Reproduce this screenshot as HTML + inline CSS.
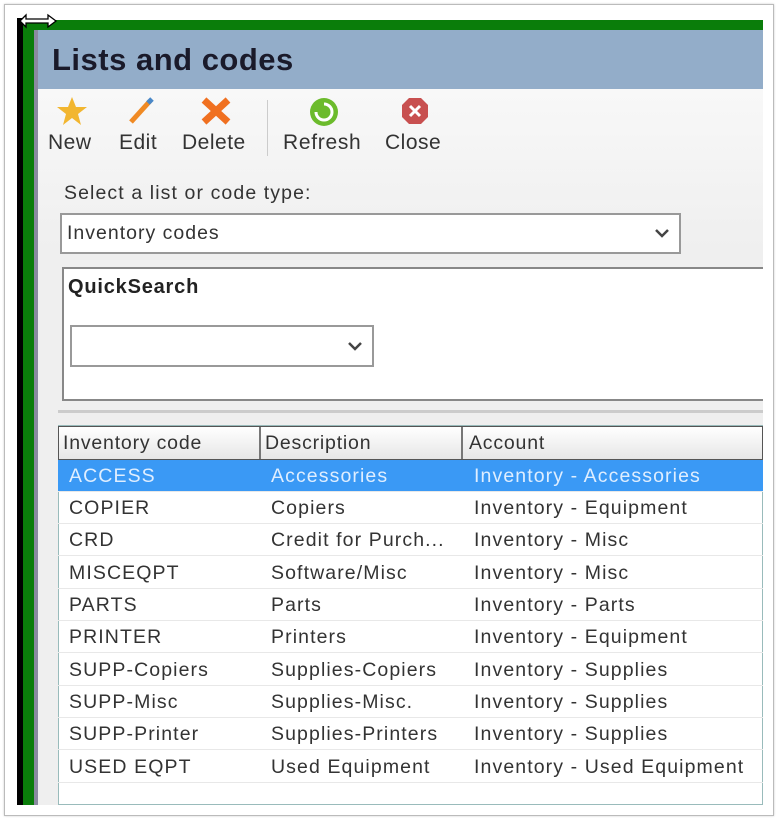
<!DOCTYPE html>
<html><head><style>
*{margin:0;padding:0;box-sizing:border-box}
body{width:778px;height:820px;background:#fff;position:relative;overflow:hidden;font-family:"Liberation Sans","DejaVu Sans",sans-serif;color:#222}
.a{position:absolute}
.frame{left:4px;top:4px;width:770px;height:812px;border:1px solid #bbb;box-shadow:0 0 2px #ccc}
.t{position:absolute;white-space:nowrap}
.row{position:absolute;left:58px;width:705px;height:32px;border-bottom:1px solid #e8e8e8;font-size:19.5px;line-height:32px;color:#333;letter-spacing:1.1px}
.row span{position:absolute;top:0}
</style></head><body>
<div class="a frame"></div>
<div class="a" style="left:17px;top:18px;width:6px;height:787px;background:#000"></div>
<div class="a" style="left:23px;top:20px;width:740px;height:10px;background:#0a7d0a"></div>
<div class="a" style="left:23px;top:20px;width:11px;height:785px;background:#0a7d0a"></div>
<div class="a" style="left:34px;top:30px;width:4px;height:775px;background:#8a8aa0"></div>
<div class="a" style="left:38px;top:30px;width:725px;height:59px;background:#93adc9"></div>
<div class="t" style="left:52px;top:42px;font-size:31px;font-weight:bold;color:#1a1a2a;letter-spacing:0.5px">Lists and codes</div>
<div class="a" style="left:38px;top:89px;width:725px;height:716px;background:linear-gradient(#f8f8f8,#efefef 160px,#efefef)"></div>
<svg class="a" style="left:55px;top:96px" width="34" height="30" viewBox="0 0 34 30"><polygon points="17,1 21,11 32,11 23,18 26,29 17,22 8,29 11,18 2,11 13,11" fill="#f2b630"/></svg>
<svg class="a" style="left:126px;top:96px" width="30" height="30"><line x1="5" y1="26" x2="24" y2="5" stroke="#f08a24" stroke-width="5"/><line x1="22" y1="7" x2="26" y2="3" stroke="#4a88c8" stroke-width="5"/></svg>
<svg class="a" style="left:200px;top:96px" width="32" height="30"><path d="M4 4L28 26M28 4L4 26" stroke="#f07020" stroke-width="7"/></svg>
<div class="a" style="left:267px;top:100px;width:1px;height:56px;background:#ccc"></div>
<svg class="a" style="left:306px;top:95px" width="36" height="32"><circle cx="18" cy="17" r="14" fill="#6cbb2c"/><path d="M18 9a8 8 0 1 1-8 8" stroke="#fff" stroke-width="3" fill="none"/></svg>
<svg class="a" style="left:400px;top:96px" width="30" height="30"><polygon points="9,2 21,2 28,9 28,21 21,28 9,28 2,21 2,9" fill="#c85050"/><path d="M10 10L20 20M20 10L10 20" stroke="#fff" stroke-width="3"/></svg>
<div class="t" style="left:48px;top:131px;font-size:21px;color:#333;letter-spacing:0.5px">New</div>
<div class="t" style="left:119px;top:131px;font-size:21px;color:#333;letter-spacing:0.5px">Edit</div>
<div class="t" style="left:182px;top:131px;font-size:21px;color:#333;letter-spacing:0.5px">Delete</div>
<div class="t" style="left:283px;top:131px;font-size:21px;color:#333;letter-spacing:0.7px">Refresh</div>
<div class="t" style="left:385px;top:131px;font-size:21px;color:#333;letter-spacing:0.5px">Close</div>
<div class="t" style="left:64px;top:182px;font-size:19.5px;color:#333;letter-spacing:1.1px">Select a list or code type:</div>
<div class="a" style="left:60px;top:213px;width:621px;height:41px;background:#fff;border:2px solid #999"></div>
<div class="t" style="left:67px;top:222px;font-size:19.5px;color:#333;letter-spacing:1px">Inventory codes</div>
<svg class="a" style="left:654px;top:227px" width="16" height="12"><path d="M2 3L8 9L14 3" stroke="#444" stroke-width="2.5" fill="none"/></svg>
<div class="a" style="left:62px;top:267px;width:701px;height:134px;background:#fff;border:2px solid #888;border-right:none"></div>
<div class="t" style="left:68px;top:276px;font-size:20px;font-weight:bold;color:#222;letter-spacing:0.8px">QuickSearch</div>
<div class="a" style="left:70px;top:325px;width:304px;height:42px;background:#fff;border:2px solid #999"></div>
<svg class="a" style="left:347px;top:340px" width="16" height="12"><path d="M2 3L8 9L14 3" stroke="#444" stroke-width="2.5" fill="none"/></svg>
<div class="a" style="left:58px;top:410px;width:705px;height:3px;background:#ccc"></div>
<div class="a" style="left:58px;top:425px;width:705px;height:380px;background:#fff;border:1px solid #9bb"></div>
<div class="a" style="left:58px;top:426px;width:705px;height:34px;background:linear-gradient(#fff,#e6e6e6);border:1px solid #555;font-size:19.5px;line-height:32px;color:#333;letter-spacing:0.8px">
<span class="t" style="left:4px">Inventory code</span>
<span class="a" style="left:200px;top:0;width:2px;height:32px;background:#777"></span>
<span class="t" style="left:206px">Description</span>
<span class="a" style="left:402px;top:0;width:2px;height:32px;background:#777"></span>
<span class="t" style="left:410px">Account</span>
</div>
<div class="row" style="top:460px;background:#3a99f5;color:#dfeeff"><span style="left:11px">ACCESS</span><span style="left:213px">Accessories</span><span style="left:416px">Inventory - Accessories</span></div>
<div class="row" style="top:492px"><span style="left:11px">COPIER</span><span style="left:213px">Copiers</span><span style="left:416px">Inventory - Equipment</span></div>
<div class="row" style="top:524px"><span style="left:11px">CRD</span><span style="left:213px">Credit for Purch...</span><span style="left:416px">Inventory - Misc</span></div>
<div class="row" style="top:557px"><span style="left:11px">MISCEQPT</span><span style="left:213px">Software/Misc</span><span style="left:416px">Inventory - Misc</span></div>
<div class="row" style="top:589px"><span style="left:11px">PARTS</span><span style="left:213px">Parts</span><span style="left:416px">Inventory - Parts</span></div>
<div class="row" style="top:621px"><span style="left:11px">PRINTER</span><span style="left:213px">Printers</span><span style="left:416px">Inventory - Equipment</span></div>
<div class="row" style="top:654px"><span style="left:11px">SUPP-Copiers</span><span style="left:213px">Supplies-Copiers</span><span style="left:416px">Inventory - Supplies</span></div>
<div class="row" style="top:686px"><span style="left:11px">SUPP-Misc</span><span style="left:213px">Supplies-Misc.</span><span style="left:416px">Inventory - Supplies</span></div>
<div class="row" style="top:718px"><span style="left:11px">SUPP-Printer</span><span style="left:213px">Supplies-Printers</span><span style="left:416px">Inventory - Supplies</span></div>
<div class="row" style="top:751px"><span style="left:11px">USED EQPT</span><span style="left:213px">Used Equipment</span><span style="left:416px">Inventory - Used Equipment</span></div>
<svg class="a" style="left:18px;top:13px" width="40" height="16"><path d="M2 8L8 2V6H30V2L38 8L30 14V10H8V14Z" fill="#fff" stroke="#000" stroke-width="1.3"/></svg>
</body></html>
